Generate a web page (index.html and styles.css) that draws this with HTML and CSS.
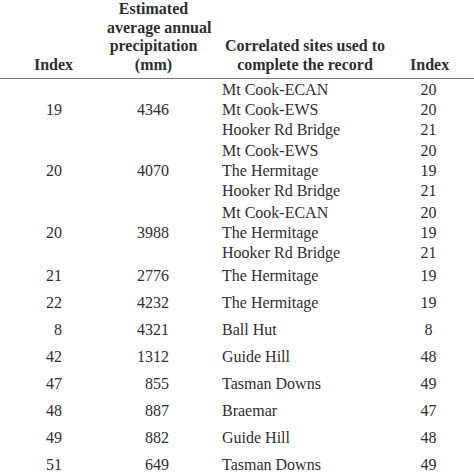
FILE: index.html
```html
<!DOCTYPE html>
<html>
<head>
<meta charset="utf-8">
<link rel="stylesheet" href="styles.css">
</head>
<body>
<table class="data">
  <colgroup>
    <col class="c1"><col class="c2"><col class="c3"><col class="c4">
  </colgroup>
  <thead>
    <tr>
      <th class="h1">Index</th>
      <th class="h2">Estimated<br>average annual<br>precipitation<br>(mm)</th>
      <th class="h3">Correlated sites used to<br>complete the record</th>
      <th class="h4">Index</th>
    </tr>
  </thead>
  <tbody>
    <tr class="grp">
      <td class="n1">19</td><td class="n2">4346</td>
      <td class="site">Mt Cook-ECAN<br>Mt Cook-EWS<br>Hooker Rd Bridge</td>
      <td class="n4">20<br>20<br>21</td>
    </tr>
    <tr class="grp">
      <td class="n1">20</td><td class="n2">4070</td>
      <td class="site">Mt Cook-EWS<br>The Hermitage<br>Hooker Rd Bridge</td>
      <td class="n4">20<br>19<br>21</td>
    </tr>
    <tr class="grp">
      <td class="n1">20</td><td class="n2">3988</td>
      <td class="site">Mt Cook-ECAN<br>The Hermitage<br>Hooker Rd Bridge</td>
      <td class="n4">20<br>19<br>21</td>
    </tr>
    <tr class="one"><td class="n1">21</td><td class="n2">2776</td><td class="site">The Hermitage</td><td class="n4">19</td></tr>
    <tr class="one"><td class="n1">22</td><td class="n2">4232</td><td class="site">The Hermitage</td><td class="n4">19</td></tr>
    <tr class="one"><td class="n1">8</td><td class="n2">4321</td><td class="site">Ball Hut</td><td class="n4">8</td></tr>
    <tr class="one"><td class="n1">42</td><td class="n2">1312</td><td class="site">Guide Hill</td><td class="n4">48</td></tr>
    <tr class="one"><td class="n1">47</td><td class="n2">855</td><td class="site">Tasman Downs</td><td class="n4">49</td></tr>
    <tr class="one"><td class="n1">48</td><td class="n2">887</td><td class="site">Braemar</td><td class="n4">47</td></tr>
    <tr class="one"><td class="n1">49</td><td class="n2">882</td><td class="site">Guide Hill</td><td class="n4">48</td></tr>
    <tr class="one"><td class="n1">51</td><td class="n2">649</td><td class="site">Tasman Downs</td><td class="n4">49</td></tr>
  </tbody>
</table>
</body>
</html>
```
FILE: styles.css
```css
html, body {
  margin: 0;
  padding: 0;
  background: #fff;
}
body {
  font-family: "Liberation Serif", "Times New Roman", serif;
  font-size: 16px;
  color: #2e2e2e;
  overflow: hidden;
}
.data {
  width: 474px;
  border-collapse: collapse;
  table-layout: fixed;
}
.c1 { width: 107px; }
.c2 { width: 93px; }
.c3 { width: 210px; }
.c4 { width: 64px; }
th {
  font-weight: bold;
  line-height: 18.7px;
  vertical-align: bottom;
  text-align: center;
  white-space: nowrap;
  padding: 0 0 3.5px 0;
  border-bottom: 1.5px solid #777;
}
.h4 { padding-right: 27px; }
td {
  padding: 0;
  line-height: 20px;
  vertical-align: middle;
}
.grp td { padding-top: 0.65px; padding-bottom: 0.65px; }
.one td { padding-top: 2.5px; padding-bottom: 4.5px; }
.n1 { text-align: right; padding-right: 45px !important; }
.n2 { text-align: right; padding-right: 31px !important; }
.site { text-align: left; padding-left: 22px !important; white-space: nowrap; }
.n4 { text-align: center; padding-right: 27px !important; }
```
